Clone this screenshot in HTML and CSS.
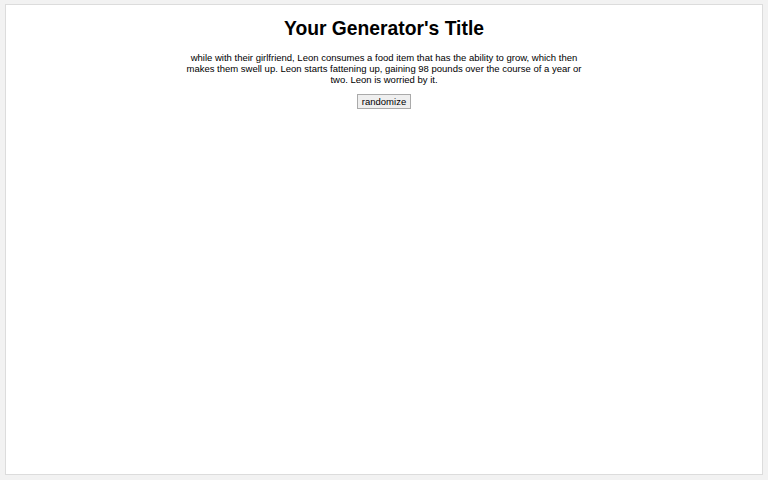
FILE: index.html
```html
<!DOCTYPE html>
<html>
<head>
<meta charset="utf-8">
<link rel="stylesheet" href="styles.css">
</head>
<body>
<div class="panel">
  <h1 class="title">Your Generator's Title</h1>
  <p class="output">while with their girlfriend, Leon consumes a food item that has the ability to grow, which then makes them swell up. Leon starts fattening up, gaining 98 pounds over the course of a year or two. Leon is worried by it.</p>
  <div class="actions"><button class="btn">randomize</button></div>
</div>
</body>
</html>
```
FILE: styles.css
```css
html, body { margin: 0; padding: 0; }
body {
  background: #f2f2f2;
  padding: 4px 5px 4px 5px;
  font-family: "Liberation Sans", Arial, sans-serif;
  color: #000;
}
.panel {
  background: #fff;
  border: 1px solid #dcdcdc;
  height: 469px;
  box-sizing: content-box;
  display: flex;
  flex-direction: column;
  align-items: center;
}
.title {
  margin: 12px 0 0 0;
  font-size: 19.3px;
  font-weight: bold;
  line-height: 23px;
}
.output {
  margin: 12px 0 0 0;
  width: 400px;
  text-align: center;
  font-size: 9.5px;
  line-height: 11px;
}
.actions { margin-top: 6px; }
.btn {
  font-family: "Liberation Sans", Arial, sans-serif;
  font-size: 9.5px;
  padding: 1px 4px;
  background: #efefef;
  border: 1px solid #aaa;
  border-radius: 0;
  color: #000;
}
```
